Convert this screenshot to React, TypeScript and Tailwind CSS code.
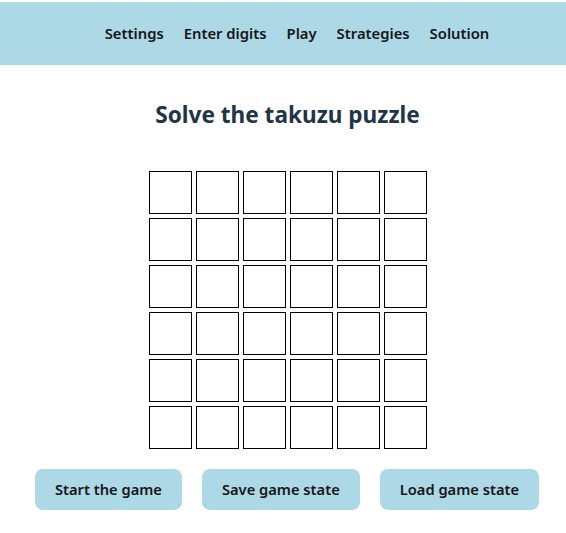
import React from "react";

const navItems = ["Settings", "Enter digits", "Play", "Strategies", "Solution"];

export default function App() {
  const cells = Array.from({ length: 36 });
  return (
    <div className="min-h-screen bg-white" style={{ fontFamily: '"Noto Sans", "Open Sans", sans-serif' }}>
      <div className="pt-[2px]">
        <nav className="h-[63px] bg-[#add8e6] flex items-center justify-center gap-[20px] pl-[28px] text-[14.8px] font-semibold text-[#161616]">
          {navItems.map((n) => (
            <span key={n}>{n}</span>
          ))}
        </nav>
      </div>
      <div className="pl-[9px] flex flex-col items-center">
        <h1 className="mt-[33px] text-[22.6px] leading-[34px] font-bold text-[#223447]">Solve the takuzu puzzle</h1>
        <div className="mt-[39px] grid grid-cols-6 gap-[4px]">
          {cells.map((_, i) => (
            <div key={i} className="w-[43px] h-[43px] border border-black bg-white" />
          ))}
        </div>
        <div className="mt-[20px] pr-[1px] flex gap-[20px]">
          {["Start the game", "Save game state", "Load game state"].map((b) => (
            <button key={b} className="h-[41px] px-[20px] rounded-[8px] bg-[#add8e6] text-[14.7px] font-semibold text-[#161616]">
              {b}
            </button>
          ))}
        </div>
      </div>
    </div>
  );
}
